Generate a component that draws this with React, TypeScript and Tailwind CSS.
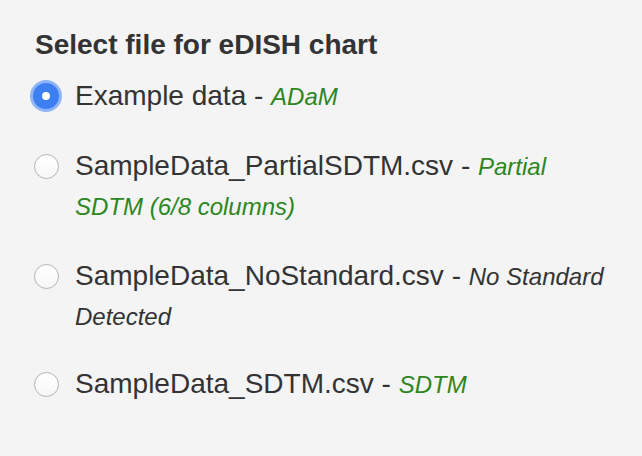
const options = [
  { file: "Example data", tag: "ADaM", green: true, checked: true },
  { file: "SampleData_PartialSDTM.csv", tag: "Partial SDTM (6/8 columns)", green: true },
  { file: "SampleData_NoStandard.csv", tag: "No Standard Detected", green: false },
  { file: "SampleData_SDTM.csv", tag: "SDTM", green: true },
];

function Radio({ checked }: { checked?: boolean }) {
  if (checked) {
    return (
      <span className="absolute left-[-42px] top-[7px] flex h-[26px] w-[26px] items-center justify-center rounded-full bg-[#3d7ef2] ring-[3px] ring-[#8fb4f7]">
        <span className="h-[8px] w-[8px] rounded-full bg-white" />
      </span>
    );
  }
  return (
    <span className="absolute left-[-41px] top-[8px] h-[25px] w-[25px] rounded-full border border-[#b4b4b4] bg-gradient-to-b from-white to-[#f7f7f7]" />
  );
}

export default function App() {
  return (
    <div className="min-h-[456px] w-[642px] bg-[#f4f4f4] pl-[35px] pt-[26px] font-['Liberation_Sans',Arial,sans-serif] text-[#333333]">
      <h4 className="text-[28px] font-bold leading-[38px]">Select file for eDISH chart</h4>
      <div className="mt-[12px] flex w-[576px] flex-col gap-[30px] pl-[40px]">
        {options.map((o, i) => (
          <label
            key={o.file}
            className={`relative block text-[28px] leading-[40px] ${i === options.length - 1 ? "-mt-[2px]" : ""}`}
          >
            <Radio checked={o.checked} />
            {o.file} -{" "}
            <span
              className={`text-[24px] italic leading-none ${o.green ? "text-[#2d861e]" : "text-[#333333]"}`}
            >
              {o.tag}
            </span>
          </label>
        ))}
      </div>
    </div>
  );
}
